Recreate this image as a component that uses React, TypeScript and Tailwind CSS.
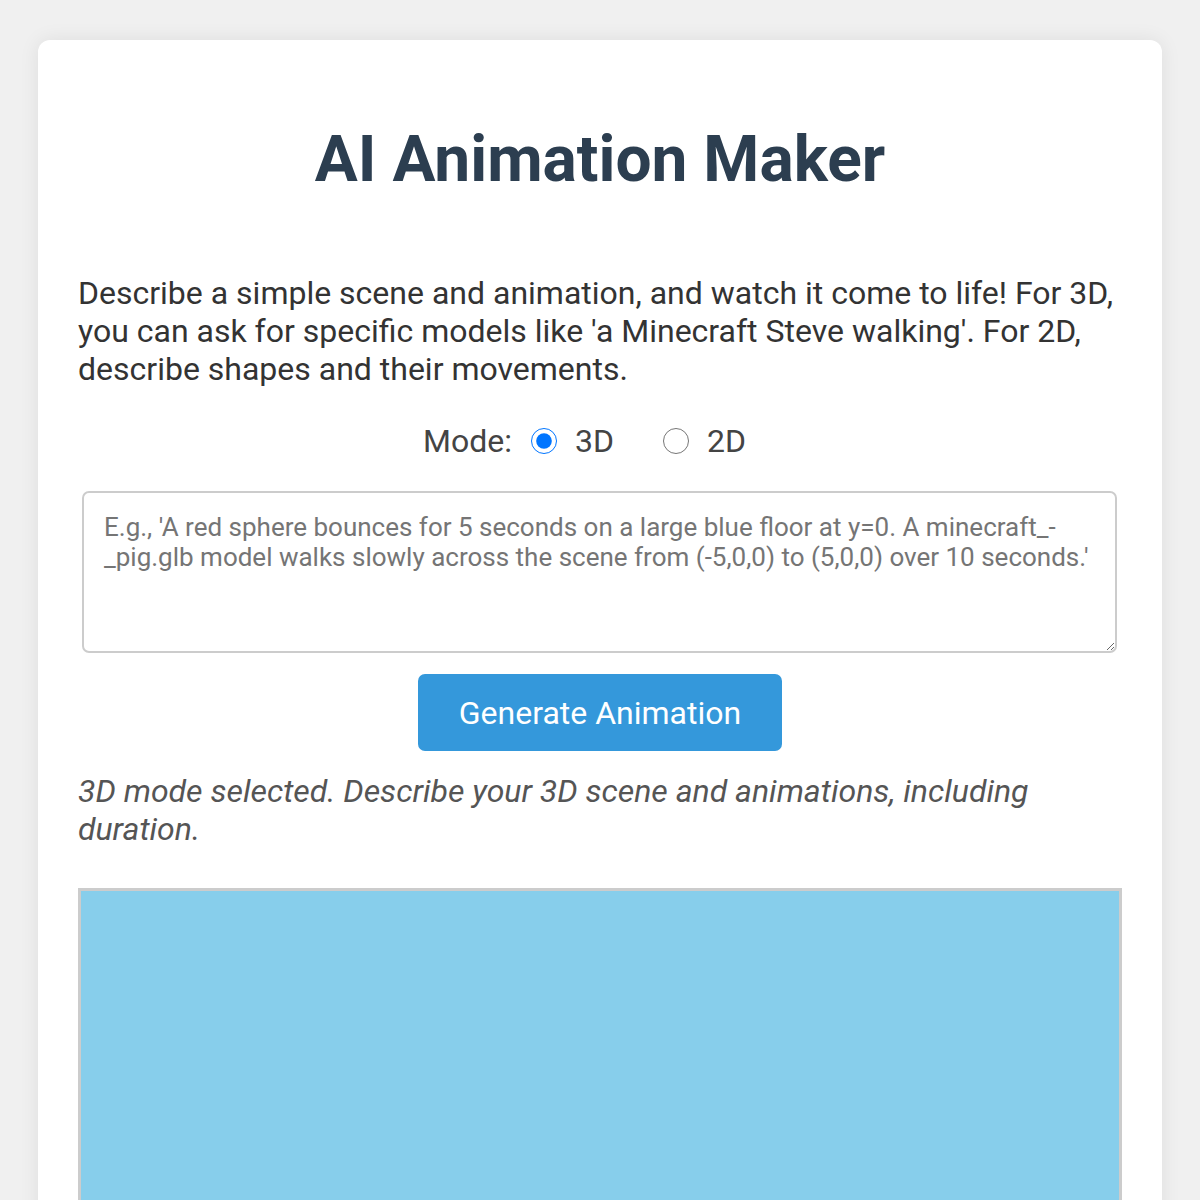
import { useState } from 'react';

export default function App() {
  const [mode, setMode] = useState<'3d' | '2d'>('3d');
  const [prompt, setPrompt] = useState('');

  return (
    <div className="min-h-screen bg-[#f0f0f0] pt-[40px] px-[38px] font-['Roboto','Liberation_Sans',sans-serif]">
      <div className="bg-white rounded-[12px] shadow-[0_0_20px_rgba(0,0,0,0.08)] px-[40px] pt-[82px] pb-[40px]">
        <h1 className="text-center text-[64px] leading-[76px] font-bold text-[#2c3e50]">AI Animation Maker</h1>

        <p className="mt-[76px] text-[32px] leading-[38px] text-[#333]">
          Describe a simple scene and animation, and watch it come to life! For 3D, you can ask for specific models like 'a Minecraft Steve walking'. For 2D, describe shapes and their movements.
        </p>

        {/* mode switch */}
        <div className="mt-[34px] flex items-center justify-center text-[32px] leading-[38px] text-[#444]">
          <span className="mr-[19px]">Mode:</span>
          <label className="flex items-center cursor-pointer">
            <input
              type="radio"
              name="mode"
              checked={mode === '3d'}
              onChange={() => setMode('3d')}
              className="w-[26px] h-[26px] m-0 accent-[#0075ff]"
            />
            <span className="ml-[18px]">3D</span>
          </label>
          <label className="flex items-center cursor-pointer ml-[49px] mr-[31px]">
            <input
              type="radio"
              name="mode"
              checked={mode === '2d'}
              onChange={() => setMode('2d')}
              className="w-[26px] h-[26px] m-0 accent-[#0075ff]"
            />
            <span className="ml-[18px]">2D</span>
          </label>
        </div>

        <textarea
          value={prompt}
          onChange={(e) => setPrompt(e.target.value)}
          placeholder="E.g., 'A red sphere bounces for 5 seconds on a large blue floor at y=0. A minecraft_-_pig.glb model walks slowly across the scene from (-5,0,0) to (5,0,0) over 10 seconds.'"
          className="block mt-[31px] ml-[4px] w-[1035px] h-[162px] border-2 border-[#ccc] rounded-[7px] px-[20px] py-[19px] text-[26px] leading-[30px] text-[#333] placeholder:text-[#757575] outline-none"
        />

        <div className="flex justify-center mt-[21px]">
          <button className="w-[364px] h-[77px] bg-[#3498db] text-white text-[32px] rounded-[7px]">Generate Animation</button>
        </div>

        <p className="mt-[21px] italic text-[32px] leading-[38px] text-[#555]">
          3D mode selected. Describe your 3D scene and animations, including duration.
        </p>

        <div className="mt-[40px] h-[600px] border-[3px] border-[#ccc] bg-[#87ceeb]" />
      </div>
    </div>
  );
}
